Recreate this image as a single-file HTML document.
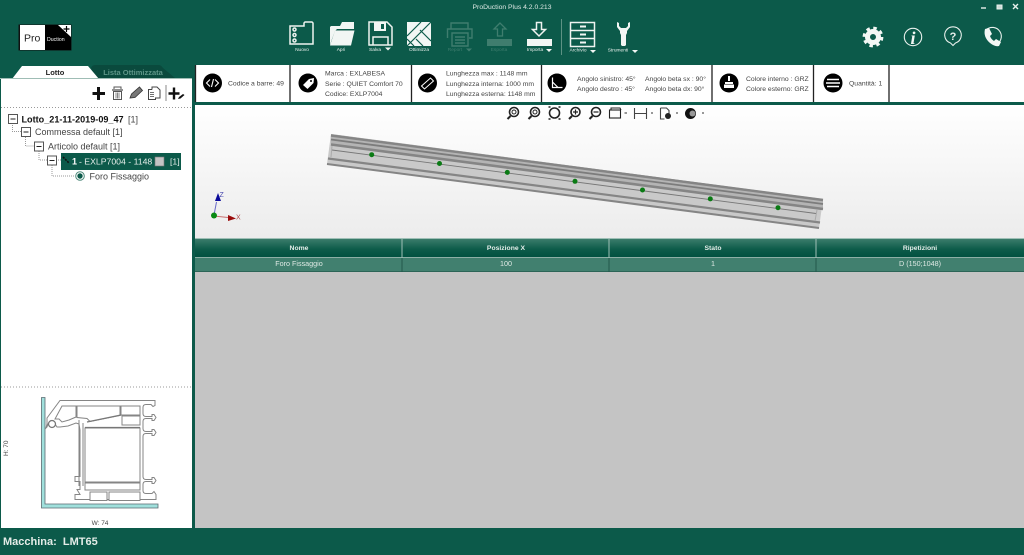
<!DOCTYPE html>
<html><head><meta charset="utf-8"><title>ProDuction Plus</title>
<style>
html,body{margin:0;padding:0;background:#0c5a4a;width:1024px;height:555px;overflow:hidden}
svg{display:block;font-family:"Liberation Sans",sans-serif}
.tb{font-size:4.8px;fill:#e8f0ec;text-anchor:middle}
.dis{font-size:4.8px;fill:#3f7d6e;text-anchor:middle}
.i{font-size:6.8px;fill:#444}
.t{font-size:9px;fill:#444}
.w{stroke:#eef3f0;fill:none;stroke-width:1.5}
.f{fill:#f2f6f4}
.p{fill:#fff;stroke:#858585;stroke-width:1}
.tree{fill:#fff;stroke:#555;stroke-width:1}
.dot{fill:none;stroke:#999;stroke-width:1;stroke-dasharray:1 1}
</style></head><body>
<svg width="1024" height="555" viewBox="0 0 1024 555" xmlns="http://www.w3.org/2000/svg">
<defs>
<linearGradient id="v" x1="0" y1="0" x2="0" y2="1"><stop offset="0" stop-color="#fff"/><stop offset="1" stop-color="#ececec"/></linearGradient>
<linearGradient id="h" x1="0" y1="0" x2="0" y2="1"><stop offset="0" stop-color="#3f7f6e"/><stop offset=".55" stop-color="#0e5c4a"/><stop offset="1" stop-color="#00503f"/></linearGradient>
</defs>
<rect width="1024" height="555" fill="#0c5a4a"/>
<text x="512" y="9" font-size="6.8" fill="#dfe9e5" text-anchor="middle">ProDuction Plus 4.2.0.213</text>
<path d="M981 8h5" stroke="#e8f0ec" stroke-width="1.400"/>
<path d="M997 5h5v4h-5z" fill="#cfdcd7" stroke="#e8f0ec"/>
<path d="M1013 4l5 5m0-5l-5 5" stroke="#e8f0ec" stroke-width="1.400"/>

<!-- logo -->
<rect x="18.500" y="24.500" width="53" height="26" fill="#111"/>
<rect x="20" y="25" width="25" height="25" fill="#fff"/>
<rect x="45" y="25" width="26" height="25" fill="#000"/>
<path d="M58 25h13v12z" fill="#fff"/>
<path d="M66.500 26v6m-3-3h6" stroke="#000" stroke-width="1.200"/>
<text x="24" y="41.500" font-size="10.500" fill="#222">Pro</text>
<text x="47" y="41" font-size="5.200" fill="#fff">Duction</text>

<!-- toolbar -->
<g>
<path class="w" d="M290 26h14v-3l1-1h7l1 1v21h-23z"/>
<circle class="w" cx="294.500" cy="29.500" r="1.500"/><circle class="w" cx="294.500" cy="35" r="1.500"/><circle class="w" cx="294.500" cy="40.500" r="1.500"/>
<text class="tb" x="302" y="51">Nuovo</text>
<path class="f" d="M330 45V27l1-1h9l2-4h12v7h-17l-2 2-3 8z"/>
<path class="f" d="M330 45.500l5-15h19.500l-3.500 15z"/>
<text class="tb" x="341" y="51">Apri</text>
<path class="w" d="M369 22h18l5 5v18h-23z"/>
<path class="f" d="M374 22h12v9h-12z"/><rect x="381" y="24" width="3" height="5" fill="#0c5a4a"/>
<path class="w" d="M373 45v-8h15v8"/>
<text class="tb" x="375" y="51">Salva</text><path class="f" d="M385 47.500h6l-3 3z"/>
<rect x="407" y="22" width="24" height="24" fill="#f2f6f4"/>
<path d="M407 36l14-14m-14 24l24-24m-17 24l-7-7m13-9l11 11m-8 5l-7-7" stroke="#0c5a4a" stroke-width="1.200"/>
<text class="tb" x="419" y="51">Ottimizza</text>
<g stroke="#3f7d6e" fill="none" stroke-width="1.400"><path d="M451 29v-6h17v6"/><path d="M447.500 38v-9h24.500v9h-3"/><path d="M452 33h16v13h-16z"/><path d="M455 37h10m-10 3h10m-10 3h10"/></g>
<text class="dis" x="455" y="51">Report</text><path fill="#3f7d6e" d="M466 48.500h6l-3 3z"/>
<path d="M500 23l-6 6h3.500v7h5v-7h3.500z" fill="none" stroke="#3f7d6e" stroke-width="1.300"/>
<rect x="487" y="39" width="25" height="7" fill="#3f7d6e"/>
<text class="dis" x="499" y="51">Esporta</text>
<path class="w" d="M536.500 22.500h5v7h4l-6.500 6.500-6.500-6.500h4z"/>
<rect x="527" y="39" width="25" height="7" fill="#f2f6f4"/>
<text class="tb" x="535" y="51">Importa</text><path class="f" d="M546 49h6l-3 3z"/>
<rect x="561" y="19" width="1" height="36" fill="#5e9284"/>
<rect class="w" x="570.500" y="22.500" width="24" height="24"/><path class="w" d="M570.500 30.500h24m-24 8h24"/>
<path class="f" d="M580 25.500h6v2h-6zM580 33.500h6v2h-6zM580 41.500h6v2h-6z"/>
<text class="tb" x="578" y="51.500">Archivio</text><path class="f" d="M590 50h6l-3 3z"/>
<path class="f" d="M617 22v5l3 4v2l1 2v10l1 1h3l1-1V35l1-2v-2l3-4v-5l-2 1v3l-2 2h-5l-2-2v-3z"/>
<text class="tb" x="618" y="51.500">Strumenti</text><path class="f" d="M632 50h6l-3 3z"/>
</g>

<!-- right icons -->
<g>
<circle cx="873" cy="37" r="5.500" fill="none" stroke="#f4f7f5" stroke-width="5"/>
<circle cx="873" cy="37" r="9" fill="none" stroke="#f4f7f5" stroke-width="2.800" stroke-dasharray="3.500 3.570"/>
<circle cx="913" cy="37" r="8.700" fill="none" stroke="#e8f0ec" stroke-width="1.100"/>
<text x="913" y="44" font-size="18" font-weight="bold" font-style="italic" font-family="Liberation Serif" fill="#f4f7f5" text-anchor="middle">i</text>
<path d="M953 45.500l-2.500-2.500a8.300 8.300 0 1 1 5 0z" fill="none" stroke="#e8f0ec" stroke-width="1.100"/>
<text x="953" y="40" font-size="11" font-weight="bold" fill="#e8f0ec" text-anchor="middle">?</text>
<path d="M986 30a9 9 0 1 1 9 15" fill="none" stroke="#e8f0ec" stroke-width="1.100"/>
<path d="M985 29l4-1 3 6-2 2q1 3 4 5l2-2 5 3-2 4q-4 1-9-3-7-6-5-14z" fill="#f4f7f5"/>
</g>

<!-- tabs -->
<path d="M95 78l-4-10q1-3 4-3h64q2 0 4 3l12 10z" fill="#0a4a3d"/>
<text x="133" y="75" font-size="7.500" font-weight="bold" fill="#5e9688" text-anchor="middle">Lista Ottimizzata</text>
<path d="M12 79l10-13h66l11 13z" fill="#fff"/>
<text x="55" y="75" font-size="7.500" font-weight="bold" fill="#222" text-anchor="middle">Lotto</text>
<rect x="1" y="78" width="191" height="450" fill="#fff"/>
<rect x="0" y="78" width="192" height="1" fill="#9fbdb5"/>
<path d="M1 107.500H192M1 387H192" stroke="#999" stroke-dasharray="1 2" stroke-width="1"/>

<!-- left toolbar -->
<path d="M98.500 87v13M92.500 93.500h12.500" stroke="#111" stroke-width="3"/>
<path d="M112 90h11" stroke="#555" stroke-width="1.300"/><path d="M114 89v-2h7v2" fill="none" stroke="#555"/>
<rect x="113.500" y="91.500" width="8" height="8" fill="#fff" stroke="#555"/><path d="M116 92.500v6m1.500-6v6m1.500-6v6" stroke="#555" stroke-width=".7"/>
<path d="M130 98l1.500-4 8-7 3 3.500-7.500 7z" fill="#777" stroke="#333" stroke-width=".8"/>
<path d="M148.500 89.500h7v10h-7z" fill="#fff" stroke="#444"/><path d="M152 89.500v-2.500h5l3 3v8h-4.500" fill="#fff" stroke="#444"/><path d="M150 92.500h4m-4 2h4m-4 2h4" stroke="#444" stroke-width=".7"/>
<rect x="165.500" y="85" width="1" height="16" fill="#888"/>
<path d="M174 87.500v12M168.500 93.500h11" stroke="#111" stroke-width="2.400"/>
<path d="M178 99l1-2 4-3 1.500 1-4 3.500z" fill="#111"/>

<!-- tree -->
<g>
<path class="dot" d="M12.500 123v8.500H21M25.500 137v9H34M39 151v9h8M52 165v11h23M61 160h-4"/>
<rect class="tree" x="8.500" y="114.500" width="9" height="9"/><path d="M10.500 119h5" stroke="#222"/>
<rect class="tree" x="21.500" y="127.500" width="9" height="9"/><path d="M23.500 132h5" stroke="#222"/>
<rect class="tree" x="34.500" y="142" width="9" height="9"/><path d="M36.500 146.500h5" stroke="#222"/>
<rect class="tree" x="47.500" y="156" width="9" height="9"/><path d="M49.500 160.500h5" stroke="#222"/>
<text x="21.500" y="122.500" font-size="9.100" font-weight="bold" fill="#111">Lotto_21-11-2019-09_47</text>
<text x="128" y="122.500" class="t">[1]</text>
<text x="35" y="135" class="t">Commessa default [1]</text>
<text x="48" y="149.500" class="t">Articolo default [1]</text>
<rect x="61" y="153" width="120" height="17" fill="#0c5a4a"/>
<path d="M63 157l6 6" stroke="#111" stroke-width="1.600" stroke-dasharray="2 1"/>
<text x="72" y="164.500" font-size="9" font-weight="bold" fill="#fff">1</text>
<text x="79" y="164.500" font-size="8.700" fill="#e6eeea">- EXLP7004 - 1148</text>
<rect x="155" y="157" width="9" height="9" fill="#c4c4c4" stroke="#777" stroke-width=".6"/>
<text x="170" y="164.500" font-size="8.700" fill="#e6eeea">[1]</text>
<circle cx="80" cy="176" r="4.300" fill="#fff" stroke="#4f8a7b"/><circle cx="80" cy="176" r="2.700" fill="#0c5a4a"/>
<text x="89.500" y="179.500" class="t">Foro Fissaggio</text>
</g>

<!-- profile -->
<g>
<path d="M41.500 397.500h3.500V504h113v4H41.500z" fill="#a0e0dc" stroke="#5a6a70" stroke-width=".8"/>
<path class="p" d="M47 424v-6l13-17.500h95v5l-2 1-2-2h-5q-3 0-3 3v6q0 3 3 3h6v-2h2l2 3-2 3h-2v-2h-6q-3 0-3 3v7q0 3 3 3h6v-2h2l2 3-2 3h-2v-2h-6q-3 0-3 3v40q0 3 3 3h6v-2h2l2 3-2 3h-2v-2h-6q-3 0-3 3v6q0 3 3 3h6l2-2 2 3v5H75v-5h5l-3-5h3v-8h-5v-5h5V430l-1-6-3-1-8 3-8 1h-3l-2-3-4-2-3 2-1 3-1 1z"/>
<path class="p" d="M77 406h43v9.500l-30 6-3-3-10-1z"/>
<path class="p" d="M121 406h19v9h-19z"/><path class="p" d="M122 416h18v9h-18z"/>
<path d="M87 422l34-7" stroke="#777" stroke-width="1.300"/>
<path class="p" d="M55 419l7-13h14v11l-7 3-7 2-3-3z"/>
<path class="p" d="M85 428h55v54H85z"/>
<path d="M85 427.500h55" stroke="#777" stroke-width="1.200"/>
<path class="p" d="M85 483h55v7H85z"/>
<path class="p" d="M90 492h17v8.500H90zM109 492h31v8.500h-31z"/>
<path d="M79 420v66M83 423v63" stroke="#858585"/>
<circle cx="52" cy="424" r="3.500" fill="#fff" stroke="#777" stroke-width="1.300"/>
<text x="0" y="0" font-size="6.500" fill="#444" transform="translate(8,456) rotate(-90)">H: 70</text>
<text x="100" y="525" font-size="6.500" fill="#444" text-anchor="middle">W: 74</text>
</g>

<!-- info bar -->
<rect x="195" y="65" width="829" height="37" fill="#fff"/>
<path d="M195.500 65v37M290 65v37M411.500 65v37M541.500 65v37M712 65v37M813.500 65v37M889 65v37" stroke="#222" stroke-width="1.300"/>
<circle cx="212.500" cy="83" r="9.500" fill="#000"/>
<path d="M210 79.500l-3.500 3.500 3.500 3.500M215 79.500l3.500 3.500-3.500 3.500M213.500 79l-2 8" stroke="#fff" stroke-width="1.100" fill="none"/>
<text class="i" x="228" y="85.500">Codice a barre: 49</text>
<circle cx="308" cy="83" r="9.500" fill="#000"/>
<path d="M303 85l6-6 5-1-.5 5-6 6z" fill="#fff"/><circle cx="311" cy="81" r="1" fill="#000"/>
<text class="i" x="325" y="75.500">Marca : EXLABESA</text>
<text class="i" x="325" y="86">Serie   : QUIET Comfort 70</text>
<text class="i" x="325" y="96">Codice: EXLP7004</text>
<circle cx="427.500" cy="83" r="9.500" fill="#000"/>
<path d="M421.500 86l9-8 3 3-9 8z" fill="none" stroke="#fff" stroke-width="1"/>
<text class="i" x="446" y="75.500">Lunghezza max     : 1148 mm</text>
<text class="i" x="446" y="86">Lunghezza interna: 1000 mm</text>
<text class="i" x="446" y="96">Lunghezza esterna: 1148 mm</text>
<circle cx="557" cy="83" r="9.500" fill="#000"/>
<path d="M552.500 77.500v10h10M552.500 82l5.500 5.500" stroke="#fff" stroke-width="1.200" fill="none"/>
<text class="i" x="577" y="81">Angolo sinistro: 45°</text>
<text class="i" x="577" y="91">Angolo destro  : 45°</text>
<text class="i" x="645" y="81">Angolo beta sx : 90°</text>
<text class="i" x="645" y="91">Angolo beta dx: 90°</text>
<circle cx="729" cy="83" r="9.500" fill="#000"/>
<path d="M728 76h2v5h-2zM725 82h8v2h-8zM724 84.500h10v3.500h-10z" fill="#fff"/>
<text class="i" x="746" y="81">Colore interno : GRZ</text>
<text class="i" x="746" y="91">Colore esterno: GRZ</text>
<circle cx="833" cy="83" r="9.500" fill="#000"/>
<path d="M827 79.500h12M826 83h14M827 86.500h12" stroke="#fff" stroke-width="1.600"/>
<text class="i" x="849" y="85.500">Quantità: 1</text>

<!-- viewer -->
<rect x="195" y="105" width="829" height="133" fill="url(#v)"/>
<g fill="none" stroke="#222" stroke-width="1.600">
<circle cx="514" cy="112" r="4.500"/><path d="M510.500 116l-3 3" stroke-width="2"/><circle cx="514" cy="112" r="2" stroke-width="1"/>
<circle cx="535" cy="112" r="4.500"/><path d="M531.500 116l-3 3" stroke-width="2"/><circle cx="535" cy="112" r="2" stroke-width="1"/>
<circle cx="554.500" cy="113" r="5"/><path d="M548.500 107h2m8 0h2m-12 12h2m8 0h2" stroke-width="1.500"/>
<circle cx="575.500" cy="112" r="4.500"/><path d="M572 116l-3 3" stroke-width="2"/><path d="M573 112h5M575.500 109.500v5" stroke-width="1.200"/>
<circle cx="596" cy="112" r="4.500"/><path d="M592.500 116l-3 3" stroke-width="2"/><path d="M593.500 112h5" stroke-width="1.200"/>
<rect x="609.500" y="110" width="11" height="8" stroke-width="1.100"/><path d="M611 110v-2h9l1 2" stroke-width="1"/>
<path d="M634.500 108v11M646.500 108v11M635 113.500h11" stroke-width="1.100" stroke="#444"/>
<path d="M660.500 108h6l2.500 2.500v3M660.500 108v11h4" stroke-width="1.100" stroke="#444"/>
</g>
<circle cx="668" cy="116" r="3" fill="#222"/>
<circle cx="690.500" cy="113.500" r="5.500" fill="#111"/><circle cx="692.500" cy="113.500" r="3" fill="#999"/>
<path d="M624.500 113h2.500M651 113h2M676 113h2M702 113h2" stroke="#333"/>

<!-- beam -->
<polygon points="331,134 823,199 819,228 327,164" fill="#c9c9c9"/>
<polygon points="331,134 823,199 823,209 331,144.500" fill="#b4b4b4"/>
<g fill="none">
<path d="M331 135.500L823 200" stroke="#858585" stroke-width="2.400"/>
<path d="M331 139.500L823 204" stroke="#7c7c7c" stroke-width="1.800"/>
<path d="M331 144.500L823 209" stroke="#858585" stroke-width="2.600"/>
<path d="M332 150L816 213.500" stroke="#777" stroke-width=".9"/>
<path d="M328 158.500L820 222.500" stroke="#858585" stroke-width="2.200"/>
<path d="M327 164L819 228" stroke="#858585" stroke-width="2"/>
<path d="M332 146L331 157M817 210L815 221" stroke="#aaa" stroke-width="1"/>
</g>
<g fill="#0a7a14">
<circle cx="371.700" cy="154.700" r="2.500"/><circle cx="439.500" cy="163.500" r="2.500"/><circle cx="507.300" cy="172.400" r="2.500"/><circle cx="575" cy="181.300" r="2.500"/><circle cx="642.500" cy="190" r="2.500"/><circle cx="710.300" cy="198.900" r="2.500"/><circle cx="778" cy="207.700" r="2.500"/>
</g>

<!-- axes -->
<path d="M214 215l2.500-13" stroke="#6a6ac8" stroke-width="1"/>
<path d="M218 193l-3 8h6z" fill="#0a0a9a"/>
<text x="219.500" y="197" font-size="7" fill="#4a4ab0">Z</text>
<path d="M214 216l14 1.500" stroke="#c87070" stroke-width="1"/>
<path d="M236 218.500l-8-3.500v6z" fill="#9a0a0a"/>
<text x="236" y="219.500" font-size="7" fill="#b05050">X</text>
<circle cx="214" cy="215.500" r="3" fill="#0a8a14"/>

<!-- table -->
<rect x="195" y="238" width="829" height="20" fill="url(#h)"/>
<rect x="195" y="238" width="829" height="1" fill="#9fbfb6"/>
<rect x="195" y="257" width="829" height="1" fill="#8db0a6"/>
<rect x="195" y="258" width="829" height="14" fill="#41806f"/>
<rect x="195" y="271" width="829" height="1" fill="#2c6557"/>
<path d="M402 239v19M609 239v19M816 239v19" stroke="#9fbfb6"/>
<path d="M402 258v14M609 258v14M816 258v14" stroke="#22584b"/>
<g font-size="6.800" font-weight="bold" fill="#e6eeea" text-anchor="middle">
<text x="299" y="250">Nome</text><text x="506" y="250">Posizione X</text><text x="713" y="250">Stato</text><text x="920" y="250">Ripetizioni</text>
</g>
<g font-size="7.200" fill="#dfe9e5" text-anchor="middle">
<text x="299" y="266">Foro Fissaggio</text><text x="506" y="266">100</text><text x="713" y="266">1</text><text x="920" y="266">D (150;1048)</text>
</g>
<rect x="195" y="272" width="829" height="256" fill="#c4c4c4"/>

<!-- status -->
<text x="3" y="545" font-size="11" font-weight="bold" fill="#e4ece8" xml:space="preserve">Macchina:  LMT65</text>
</svg>
</body></html>
